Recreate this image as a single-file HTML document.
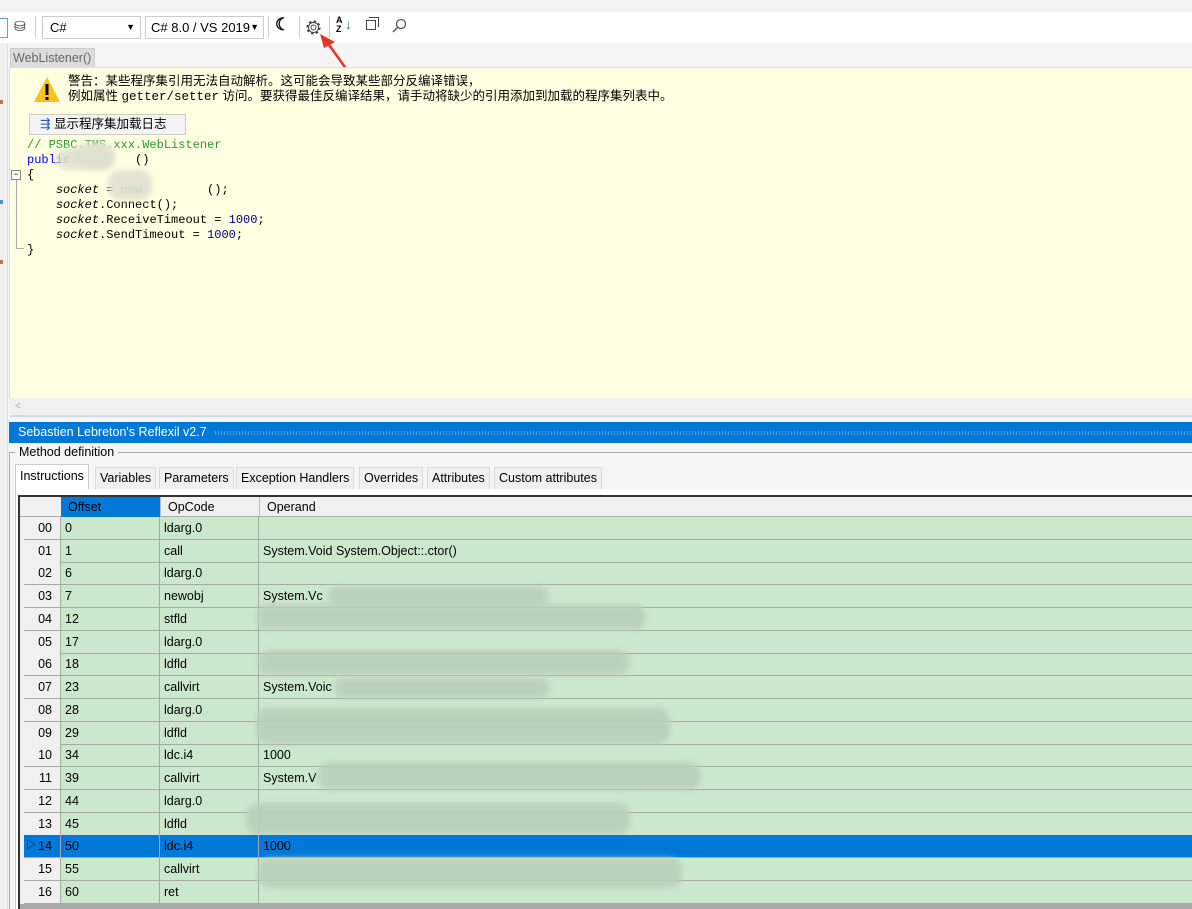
<!DOCTYPE html>
<html><head><meta charset="utf-8"><style>
*{margin:0;padding:0;box-sizing:border-box}
body{width:1192px;height:909px;overflow:hidden;background:#f5f5f5;position:relative;font-family:"Liberation Sans","Noto Sans CJK SC",sans-serif;font-size:13px;color:#000}
.a{position:absolute}
.code{font-family:"Liberation Mono","Noto Sans CJK SC",monospace;font-size:12px;white-space:pre}
.blob{position:absolute;background:#b9cfb9;border-radius:12px;filter:blur(3px);opacity:.9}
.row{position:absolute;left:24px;right:0;height:23px;border-bottom:1px solid #a8a8a8;font-size:12.5px;line-height:22px}
.row div{position:absolute;top:0;height:22px;padding-left:4px}
.c0{left:0;width:37px;background:#f0f0f0;text-align:right;padding-right:8px;border-right:1px solid #a8a8a8}
.c1{left:37px;width:99px;border-right:1px solid #a8a8a8}
.c2{left:136px;width:99px;border-right:1px solid #a8a8a8}
.c3{left:235px;right:0}
.tab{position:absolute;top:467px;height:22px;border:1px solid #d9d9d9;border-bottom:none;background:#f0f0f0;font-size:12.5px;line-height:21px;padding:0 4px}
</style></head><body>
<div class="a" style="left:0;top:0;width:1192px;height:12px;background:#f3f3f3"></div>
<div class="a" style="left:0;top:12px;width:1192px;height:31px;background:#fff"></div>
<div class="a" style="left:0;top:18px;width:8px;height:20px;border:1px solid #6aa0d8;border-left:none"></div>
<div class="a" style="left:14px;top:18px;font-size:14px;color:#333">⛁</div>
<div class="a" style="left:35px;top:16px;width:1px;height:22px;background:#ccc"></div>
<div class="a" style="left:42px;top:16px;width:99px;height:23px;border:1px solid #ccc;background:#fff;line-height:21px;padding-left:7px">C#<span class="a" style="right:5px;top:0;font-size:9px">▼</span></div>
<div class="a" style="left:145px;top:16px;width:119px;height:23px;border:1px solid #ccc;background:#fff;line-height:21px;padding-left:5px;overflow:hidden;white-space:nowrap">C# 8.0 / VS 2019<span class="a" style="right:4px;top:0;font-size:9px;background:#fff">▼</span></div>
<div class="a" style="left:268px;top:16px;width:1px;height:22px;background:#ccc"></div>
<div class="a" style="left:275px;top:15px;font-size:17px;font-weight:bold">☾</div>
<div class="a" style="left:299px;top:16px;width:1px;height:22px;background:#ccc"></div>
<svg class="a" style="left:305px;top:19px" width="17" height="17" viewBox="0 0 17 17"><circle cx="8.5" cy="8.5" r="2.5" fill="none" stroke="#444"/><circle cx="8.5" cy="8.5" r="6" fill="none" stroke="#444" stroke-dasharray="2.4 2.3" stroke-width="2.2"/><circle cx="8.5" cy="8.5" r="5" fill="none" stroke="#444" stroke-width=".9"/></svg>
<div class="a" style="left:329px;top:16px;width:1px;height:22px;background:#ccc"></div>
<div class="a" style="left:336px;top:16px;font-size:9px;line-height:9px;font-weight:bold">A<br>Z</div><div class="a" style="left:345px;top:17px;color:#1a5fb4;font-size:13px;font-weight:bold">↓</div>
<div class="a" style="left:366px;top:20px;width:10px;height:10px;border:1px solid #444"></div><div class="a" style="left:369px;top:17px;width:10px;height:10px;border-top:1px solid #444;border-right:1px solid #444"></div>
<svg class="a" style="left:391px;top:18px" width="16" height="16"><circle cx="10" cy="6" r="4.5" fill="none" stroke="#555" stroke-width="1.3"/><line x1="7" y1="9" x2="2" y2="14" stroke="#555" stroke-width="1.5"/></svg>
<svg class="a" style="left:315px;top:34px" width="40" height="40"><line x1="32" y1="36" x2="12" y2="8" stroke="#e8322a" stroke-width="2.5"/><polygon points="5,0 20,8 9,14" fill="#e8322a"/></svg>
<div class="a" style="left:0;top:43px;width:8px;height:866px;background:#f0f0f0;border-right:1px solid #ddd"></div>
<div class="a" style="left:0;top:100px;width:3px;height:4px;background:#d07030"></div>
<div class="a" style="left:0;top:200px;width:3px;height:4px;background:#4a90d0"></div>
<div class="a" style="left:0;top:260px;width:3px;height:4px;background:#d07030"></div>
<div class="a" style="left:10px;top:48px;width:85px;height:20px;background:#dcdcdc;border:1px solid #ccc;border-bottom:none;color:#666;font-size:12.5px;line-height:19px;padding-left:2px">WebListener()</div>
<div class="a" style="left:9px;top:67px;width:1183px;height:331px;background:#ffffe1;border-top:1px solid #ddd;border-left:1px solid #ddd"></div>
<svg class="a" style="left:33px;top:76px" width="28" height="27"><polygon points="14,1 27,26 1,26" fill="#f6c21c"/><rect x="12.5" y="8" width="3" height="11" fill="#000"/><rect x="12.5" y="21" width="3" height="3" fill="#000"/></svg>
<div class="a" style="left:68px;top:74px;font-size:12.5px;line-height:15px;white-space:pre">警告：某些程序集引用无法自动解析。这可能会导致某些部分反编译错误，
例如属性 <span style="font-family:'Liberation Mono',monospace">getter/setter</span> 访问。要获得最佳反编译结果，请手动将缺少的引用添加到加载的程序集列表中。</div>
<div class="a" style="left:29px;top:114px;width:157px;height:21px;border:1px solid #ccc;background:#f3f3f3;font-size:12.5px;line-height:19px;padding-left:10px"><span style="color:#1a5fb4">⇶</span> 显示程序集加载日志</div>
<div class="a code" style="left:27px;top:138px;line-height:15px"><span style="color:#2a9a2a">// PSBC.TMS.xxx.WebListener</span>
<span style="color:#0000ff">public</span>         ()
{
    <i>socket</i> = <span style="color:#008b8b">new</span>         ();
    <i>socket</i>.Connect();
    <i>socket</i>.ReceiveTimeout = <span style="color:#00008b">1000</span>;
    <i>socket</i>.SendTimeout = <span style="color:#00008b">1000</span>;
}</div>
<div class="a" style="left:11px;top:170px;width:10px;height:10px;border:1px solid #888;background:#fff;font-size:9px;line-height:7px;text-align:center">−</div>
<div class="a" style="left:16px;top:180px;width:8px;height:69px;border-left:1px solid #aaa;border-bottom:1px solid #aaa"></div>
<div class="blob" style="left:75px;top:142px;width:40px;height:26px;background:#e4e4d4"></div>
<div class="blob" style="left:56px;top:148px;width:58px;height:22px;background:#e0e0d0"></div>
<div class="blob" style="left:108px;top:170px;width:44px;height:30px;background:#e0e0d0"></div>
<div class="a" style="left:10px;top:398px;width:1182px;height:17px;background:#f0f0f0;color:#aaa;font-size:10px;padding-left:5px;line-height:17px">&lt;</div>
<div class="a" style="left:10px;top:415px;width:1182px;height:2px;background:#d8d8e0"></div>
<div class="a" style="left:9px;top:422px;width:1183px;height:21px;background:#0078d7;color:#fff;font-size:12.5px;line-height:21px;padding-left:9px">Sebastien Lebreton's Reflexil v2.7<span class="a" style="left:206px;right:0;top:9px;height:4px;background:repeating-linear-gradient(90deg,#4fa0e6 0 1px,transparent 1px 3px)"></span></div>
<div class="a" style="left:9px;top:452px;width:1183px;height:1px;background:#aaa"></div>
<div class="a" style="left:9px;top:452px;width:1px;height:457px;background:#aaa"></div>
<div class="a" style="left:15px;top:445px;background:#f5f5f5;padding:0 4px;font-size:12.5px">Method definition</div>
<div class="tab" style="left:15px;top:464px;height:26px;background:#fff;border-color:#ccc;line-height:23px">Instructions</div>
<div class="tab" style="left:95px">Variables</div>
<div class="tab" style="left:159px">Parameters</div>
<div class="tab" style="left:236px">Exception Handlers</div>
<div class="tab" style="left:359px">Overrides</div>
<div class="tab" style="left:427px">Attributes</div>
<div class="tab" style="left:494px">Custom attributes</div>
<div class="a" style="left:15px;top:489px;width:1177px;height:420px;background:#fff;border-left:1px solid #ccc"></div>
<div class="a" style="left:18px;top:495px;width:1174px;height:414px;background:#cce8cc;border-top:2px solid #333;border-left:2px solid #333"></div>
<div class="a" style="left:20px;top:497px;width:1172px;height:20px;background:#f0f0f0;border-bottom:1px solid #aaa;font-size:12.5px;line-height:20px">
<div class="a" style="left:41px;width:99px;height:20px;background:#0078d7;padding-left:7px">Offset</div>
<div class="a" style="left:140px;width:99px;height:20px;padding-left:7px;border-left:1px solid #bbb">OpCode</div>
<div class="a" style="left:239px;width:200px;height:20px;padding-left:7px;border-left:1px solid #bbb">Operand</div>
</div>
<div class="a" style="left:20px;top:517px;width:4px;height:390px;background:#f0f0f0"></div>
<div class="row" style="top:517px"><div class="c0">00</div><div class="c1">0</div><div class="c2">ldarg.0</div><div class="c3"></div></div>
<div class="row" style="top:540px"><div class="c0">01</div><div class="c1">1</div><div class="c2">call</div><div class="c3">System.Void System.Object::.ctor()</div></div>
<div class="row" style="top:562px"><div class="c0">02</div><div class="c1">6</div><div class="c2">ldarg.0</div><div class="c3"></div></div>
<div class="row" style="top:585px"><div class="c0">03</div><div class="c1">7</div><div class="c2">newobj</div><div class="c3">System.Vc</div></div>
<div class="row" style="top:608px"><div class="c0">04</div><div class="c1">12</div><div class="c2">stfld</div><div class="c3"></div></div>
<div class="row" style="top:631px"><div class="c0">05</div><div class="c1">17</div><div class="c2">ldarg.0</div><div class="c3"></div></div>
<div class="row" style="top:653px"><div class="c0">06</div><div class="c1">18</div><div class="c2">ldfld</div><div class="c3"></div></div>
<div class="row" style="top:676px"><div class="c0">07</div><div class="c1">23</div><div class="c2">callvirt</div><div class="c3">System.Voic</div></div>
<div class="row" style="top:699px"><div class="c0">08</div><div class="c1">28</div><div class="c2">ldarg.0</div><div class="c3"></div></div>
<div class="row" style="top:722px"><div class="c0">09</div><div class="c1">29</div><div class="c2">ldfld</div><div class="c3"></div></div>
<div class="row" style="top:744px"><div class="c0">10</div><div class="c1">34</div><div class="c2">ldc.i4</div><div class="c3">1000</div></div>
<div class="row" style="top:767px"><div class="c0">11</div><div class="c1">39</div><div class="c2">callvirt</div><div class="c3">System.V</div></div>
<div class="row" style="top:790px"><div class="c0">12</div><div class="c1">44</div><div class="c2">ldarg.0</div><div class="c3"></div></div>
<div class="row" style="top:813px"><div class="c0">13</div><div class="c1">45</div><div class="c2">ldfld</div><div class="c3"></div></div>
<div class="blob" style="left:328px;top:586px;width:220px;height:20px"></div>
<div class="blob" style="left:256px;top:604px;width:390px;height:26px"></div>
<div class="blob" style="left:258px;top:650px;width:372px;height:25px"></div>
<div class="blob" style="left:334px;top:678px;width:216px;height:20px"></div>
<div class="blob" style="left:256px;top:708px;width:414px;height:36px"></div>
<div class="blob" style="left:318px;top:762px;width:382px;height:28px"></div>
<div class="blob" style="left:246px;top:803px;width:384px;height:32px"></div>
<div class="row" style="top:835px;background:#0078d7;color:#000"><div class="c0" style="background:#0078d7"><span style="position:absolute;left:2px;font-size:10px">▷</span>14</div><div class="c1">50</div><div class="c2">ldc.i4</div><div class="c3">1000</div></div>
<div class="row" style="top:858px"><div class="c0">15</div><div class="c1">55</div><div class="c2">callvirt</div><div class="c3"></div></div>
<div class="row" style="top:881px"><div class="c0">16</div><div class="c1">60</div><div class="c2">ret</div><div class="c3"></div></div>
<div class="blob" style="left:258px;top:858px;width:424px;height:30px"></div>
<div class="a" style="left:20px;top:904px;width:1172px;height:5px;background:#a8a8a8"></div>
</body></html>
